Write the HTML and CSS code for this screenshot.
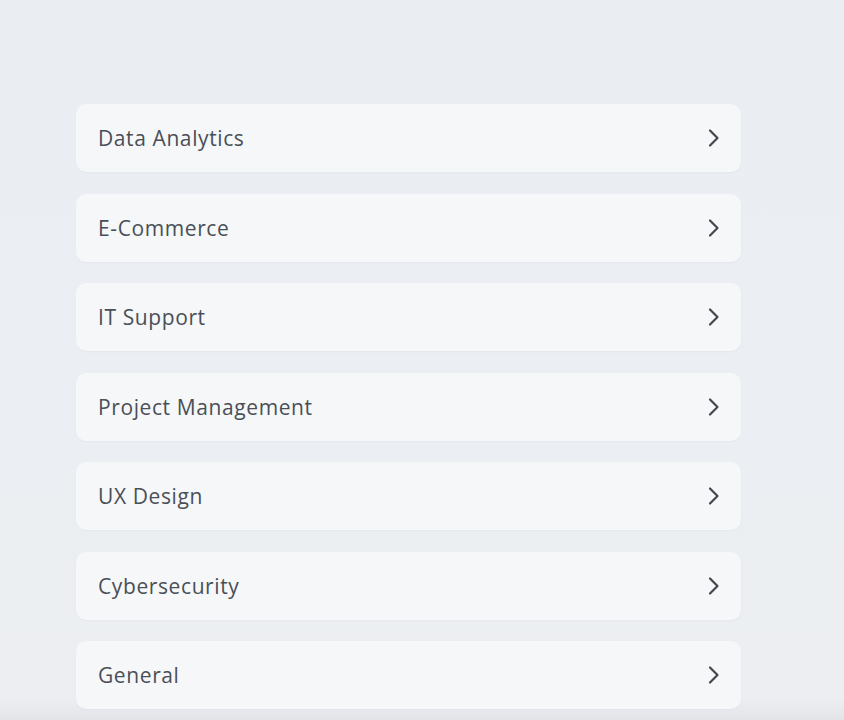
FILE: index.html
```html
<!DOCTYPE html>
<html lang="en">
<head>
<meta charset="utf-8">
<title>Topics</title>
<link rel="stylesheet" href="styles.css">
</head>
<body>
<main class="page">
  <ul class="list">
    <li class="item"><span class="label">Data Analytics</span><svg class="chev" viewBox="0 0 14 20" width="14" height="20"><path d="M3 2.5 L10.5 10 L3 17.5"/></svg></li>
    <li class="item"><span class="label">E-Commerce</span><svg class="chev" viewBox="0 0 14 20" width="14" height="20"><path d="M3 2.5 L10.5 10 L3 17.5"/></svg></li>
    <li class="item"><span class="label">IT Support</span><svg class="chev" viewBox="0 0 14 20" width="14" height="20"><path d="M3 2.5 L10.5 10 L3 17.5"/></svg></li>
    <li class="item"><span class="label">Project Management</span><svg class="chev" viewBox="0 0 14 20" width="14" height="20"><path d="M3 2.5 L10.5 10 L3 17.5"/></svg></li>
    <li class="item"><span class="label">UX Design</span><svg class="chev" viewBox="0 0 14 20" width="14" height="20"><path d="M3 2.5 L10.5 10 L3 17.5"/></svg></li>
    <li class="item"><span class="label">Cybersecurity</span><svg class="chev" viewBox="0 0 14 20" width="14" height="20"><path d="M3 2.5 L10.5 10 L3 17.5"/></svg></li>
    <li class="item"><span class="label">General</span><svg class="chev" viewBox="0 0 14 20" width="14" height="20"><path d="M3 2.5 L10.5 10 L3 17.5"/></svg></li>
  </ul>
</main>
</body>
</html>
```
FILE: styles.css
```css
html, body {
  margin: 0;
  padding: 0;
  height: 100%;
}
body {
  background: linear-gradient(180deg, #eaedf1 0%, #ebeef2 60%, #eceef1 97%, #e2e4e8 100%);
  font-family: "Open Sans", "Liberation Sans", sans-serif;
  overflow: hidden;
}
.page {
  padding: 104px 0 0 76px;
}
.list {
  list-style: none;
  margin: 0;
  padding: 0;
  width: 665px;
  display: flex;
  flex-direction: column;
  gap: 21.5px;
}
.item {
  height: 68px;
  box-sizing: border-box;
  background: #f5f7f9;
  border-radius: 10px;
  display: flex;
  align-items: center;
  justify-content: space-between;
  padding: 0 20px 0 22px;
  box-shadow: 0 1px 2px rgba(60, 70, 90, 0.04);
}
.label {
  font-size: 21px;
  color: #4a4f57;
  letter-spacing: 0.6px;
}
.chev path {
  fill: none;
  stroke: #44484e;
  stroke-width: 2.2;
  stroke-linecap: round;
  stroke-linejoin: round;
}
```
